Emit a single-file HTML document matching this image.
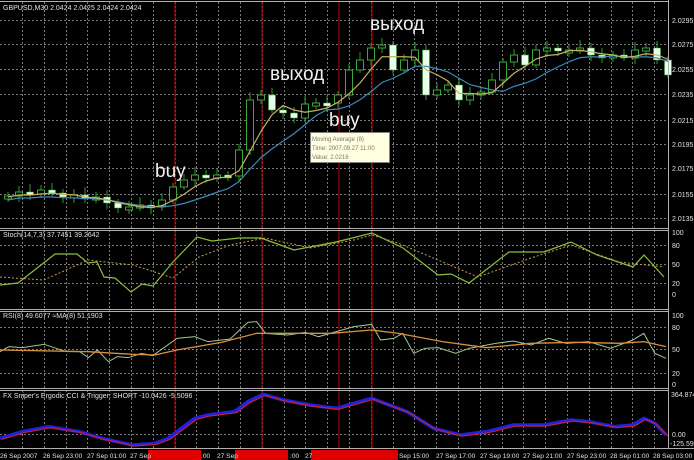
<!DOCTYPE html>
<html><head><meta charset="utf-8"><style>
html,body{margin:0;padding:0;background:#000;width:694px;height:460px;overflow:hidden}
svg{display:block}
text{font-family:"Liberation Sans",sans-serif}
.s{font-size:7px;fill:#e0e0e0}
.big{font-size:19px;fill:#f0f0f0}
</style></head><body>
<svg id="c" width="694" height="460" viewBox="0 0 694 460" xmlns="http://www.w3.org/2000/svg">
<rect width="694" height="460" fill="#000"/>
<g id="grid" stroke="#7a7a7a" stroke-width="1" stroke-dasharray="2,2"></g>
<g id="red" stroke="#a00000" stroke-width="1.2"></g>
<g id="plot"></g>
<g stroke="#b0b0b0" stroke-width="1" fill="none">
<line x1="0" y1="1.5" x2="668" y2="1.5"/>
<line x1="668.5" y1="0" x2="668.5" y2="449"/>
<line x1="0" y1="228.5" x2="668" y2="228.5"/>
<line x1="0" y1="230.5" x2="668" y2="230.5"/>
<line x1="0" y1="309.5" x2="668" y2="309.5"/>
<line x1="0" y1="311.5" x2="668" y2="311.5"/>
<line x1="0" y1="388.5" x2="668" y2="388.5"/>
<line x1="0" y1="390.5" x2="668" y2="390.5"/>
<line x1="0" y1="448.5" x2="694" y2="448.5"/>
</g>
<g class="s">
<text x="672" y="23">2.0295</text><text x="672" y="47">2.0275</text><text x="672" y="72">2.0255</text>
<text x="672" y="97">2.0235</text><text x="672" y="123">2.0215</text><text x="672" y="147">2.0195</text>
<text x="672" y="171">2.0175</text><text x="672" y="197">2.0155</text><text x="672" y="221">2.0135</text>
<text x="672" y="235">100</text><text x="672" y="248">80</text><text x="672" y="267">50</text><text x="672" y="286">20</text><text x="672" y="297">0</text>
<text x="672" y="318">100</text><text x="672" y="330">80</text><text x="672" y="352">50</text><text x="672" y="376">20</text><text x="672" y="387">0</text>
<text x="671" y="397">364.8749</text><text x="672" y="437">0.00</text><text x="670" y="446">-125.596</text>
<text x="3" y="10">GBPUSD,M30  2.0424 2.0425 2.0424 2.0424</text>
<text x="3" y="237">Stoch(14,7,3) 37.7451 39.2642</text>
<text x="3" y="318">RSI(8) 49.6077  ≈MA(8) 51.1903</text>
<text x="3" y="398">FX Sniper's Ergodic CCI &amp; Trigger: SHORT -10.0426 -5.5096</text>
</g>
<g>
<rect x="148" y="450" width="53" height="10" fill="#e00000"/>
<rect x="235" y="450" width="53" height="10" fill="#e00000"/>
<rect x="311" y="450" width="87" height="10" fill="#e00000"/>
</g>
<g class="s" style="font-size:6.6px">
<text x="0" y="458">26 Sep 2007</text><text x="43" y="458">26 Sep 23:00</text><text x="87" y="458">27 Sep 01:00</text>
<text x="130" y="458">27 Sep</text><text x="201" y="458">:00</text><text x="217" y="458">27 Sep</text><text x="290" y="458">:00</text>
<text x="305" y="458">27</text><text x="399" y="458">Sep 15:00</text><text x="436" y="458">27 Sep 17:00</text>
<text x="480" y="458">27 Sep 19:00</text><text x="523" y="458">27 Sep 21:00</text><text x="567" y="458">27 Sep 23:00</text>
<text x="610" y="458">28 Sep 01:00</text><text x="653" y="458">28 Sep 03:00</text>
</g>
<rect x="310.5" y="132.5" width="79" height="30" fill="#ffffe0" stroke="#808080"/>
<g style="font-size:6px;fill:#777">
<text x="312" y="141">Moving Average (8)</text>
<text x="312" y="150">Time: 2007.09.27 11:00</text>
<text x="312" y="159">Value: 2.0216</text>
</g>
<text class="big" x="155" y="177">buy</text>
<text class="big" x="270" y="80">выход</text>
<text class="big" x="370" y="30">выход</text>
<text class="big" x="329" y="126">buy</text>
</svg>
<script>
(function(){
var NS="http://www.w3.org/2000/svg";
function el(p,t,a){var e=document.createElementNS(NS,t);for(var k in a)e.setAttribute(k,a[k]);p.appendChild(e);return e;}
var grid=document.getElementById('grid'),red=document.getElementById('red'),plot=document.getElementById('plot');
for(var gx=22;gx<668;gx+=21.8){var xx=Math.round(gx)+0.5;el(grid,'line',{x1:xx,y1:2,x2:xx,y2:448});}
[20,44,69,94,120,144,168,194,218,245,264,283,327,349,373,434].forEach(function(y){el(grid,'line',{x1:0,y1:y+.5,x2:668,y2:y+.5});});
[175,262,339,372].forEach(function(x){el(red,'line',{x1:x,y1:2,x2:x,y2:448});});
var cl=[196,192,194,190,193,197,195,199,197,203,208,207,205,206,200,187,180,175,178,175,176,150,100,95,110,113,118,104,103,103,95,70,60,48,45,70,60,50,95,90,85,100,95,92,80,62,55,65,50,48,51,50,48,55,58,55,58,50,48,60,75];
var prev=198;
for(var i=0;i<cl.length;i++){
 var cx=8+i*11,o=prev,c=cl[i];var tp=Math.min(o,c),bt=Math.max(o,c);if(bt-tp<3){bt=tp+3;}
 el(plot,'line',{x1:cx,y1:tp-4-(i*7%5),x2:cx,y2:bt+3+(i*3%4),stroke:'#2f9a2f','stroke-width':1});
 if(c<o){el(plot,'rect',{x:cx-3.5,y:tp,width:7,height:bt-tp,fill:'#000',stroke:'#39a839','stroke-width':1});}
 else{el(plot,'rect',{x:cx-3.5,y:tp,width:7,height:bt-tp,fill:'#e8ffe8',stroke:'#2f9a2f','stroke-width':.5});}
 prev=c;
}
function ma(arr,n){var r=[];for(var i=0;i<arr.length;i++){var s=0,k=0;for(var j=Math.max(0,i-n+1);j<=i;j++){s+=arr[j];k++;}r.push(s/k);}return r;}
function pl(pts,col,w,dash){var a={points:pts.map(function(p){return p[0]+','+p[1]}).join(' '),fill:'none',stroke:col,'stroke-width':w};if(dash)a['stroke-dasharray']=dash;el(plot,'polyline',a);}
var m1=ma(cl,4),m2=ma(cl,8);
pl(m2.map(function(v,i){return[8+i*11,v+4]}),'#3a8ab8',1.2);
pl(m1.map(function(v,i){return[8+i*11,v+1]}),'#c8b060',1.2);
function cv(a){return a.map(function(p){return[p[0]/2.26,p[1]/3+225]});}
pl([[0,285],[18,283],[55,254],[77,254],[88,263],[97,262],[104,277],[115,278],[131,292],[142,284],[153,286],[173,262],[197,237],[212,241],[239,238],[261,238],[294,250],[336,242],[372,233],[403,248],[438,275],[451,274],[469,283],[509,252],[544,252],[571,242],[597,255],[633,267],[644,255],[664,277]],'#8cbe3c',1.2);
pl([[0,277],[44,280],[88,260],[133,265],[173,278],[199,257],[230,245],[265,238],[310,248],[354,240],[372,235],[398,243],[478,277],[531,258],[571,245],[619,262],[664,267]],'#c89a50',1,'2,2');
pl(cv([[0,380],[20,365],[50,368],[100,358],[150,380],[180,380],[200,398],[220,375],[245,410],[265,395],[290,398],[320,385],[345,392],[400,340],[440,335],[470,350],[520,342],[560,292],[580,290],[600,325],[650,330],[690,322],[720,335],[760,320],[800,305],[840,298],[860,345],[890,340],[910,325],[935,385],[960,370],[990,368],[1030,385],[1060,370],[1120,355],[1160,348],[1200,360],[1240,340],[1280,355],[1330,350],[1380,370],[1430,345],[1455,325],[1480,385],[1505,400]]),'#a0c890',1);
pl(cv([[0,375],[200,380],[300,388],[350,390],[400,375],[500,352],[580,325],[650,325],[750,325],[840,315],[900,325],[1000,350],[1100,368],[1200,355],[1300,352],[1400,355],[1455,350],[1505,365]]),'#d89040',1.3);
var cc=cv([[0,640],[50,620],[110,605],[180,620],[230,640],[300,660],[350,655],[380,640],[400,620],[440,580],[470,570],[530,560],[560,530],[595,508],[640,525],[700,540],[760,550],[800,535],[840,520],[880,540],[920,560],[980,610],[1040,630],[1100,620],[1160,600],[1230,600],[1290,585],[1330,590],[1390,605],[1430,600],[1455,580],[1480,595],[1505,630]]);
pl(cc,'#2020e0',3.5);
pl(cc.map(function(p){return[p[0]+2,p[1]+1]}),'#c02030',1.2);
})();
</script>
</body></html>
